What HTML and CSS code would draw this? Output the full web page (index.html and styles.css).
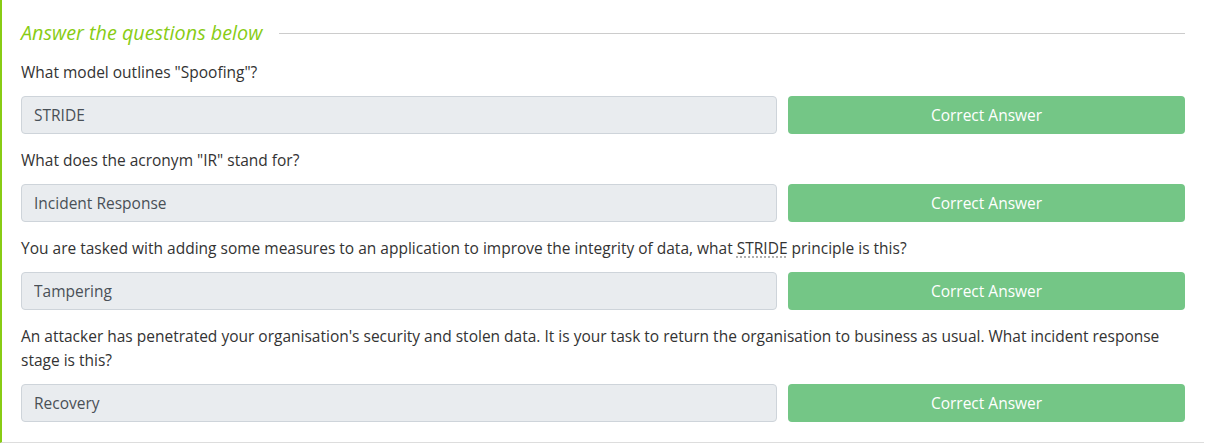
FILE: index.html
```html
<!DOCTYPE html>
<html lang="en">
<head>
    <meta charset="UTF-8">
    <meta name="viewport" content="width=device-width, initial-scale=1.0">
    <title>Task Questions</title>
    <link rel="stylesheet" href="styles.css">
</head>
<body>
    <div class="task">
        <div class="task-heading">
            <h3>Answer the questions below</h3>
            <span class="rule"></span>
        </div>

        <div class="question">
            <p>What model outlines "Spoofing"?</p>
            <div class="answer-row">
                <input type="text" class="answer" value="STRIDE" disabled>
                <button type="button" class="correct">Correct Answer</button>
            </div>
        </div>

        <div class="question">
            <p>What does the acronym "IR" stand for?</p>
            <div class="answer-row">
                <input type="text" class="answer" value="Incident Response" disabled>
                <button type="button" class="correct">Correct Answer</button>
            </div>
        </div>

        <div class="question">
            <p>You are tasked with adding some measures to an application to improve the integrity of data, what <abbr title="Spoofing, Tampering, Repudiation, Information disclosure, Denial of service, Elevation of privilege">STRIDE</abbr> principle is this?</p>
            <div class="answer-row">
                <input type="text" class="answer" value="Tampering" disabled>
                <button type="button" class="correct">Correct Answer</button>
            </div>
        </div>

        <div class="question">
            <p>An attacker has penetrated your organisation's security and stolen data. It is your task to return the organisation to business as usual. What incident response stage is this?</p>
            <div class="answer-row">
                <input type="text" class="answer" value="Recovery" disabled>
                <button type="button" class="correct">Correct Answer</button>
            </div>
        </div>
    </div>
</body>
</html>
```

FILE: styles.css
```css
body {
    margin: 0;
    background-color: #fff;
    font-family: 'Open Sans', sans-serif;
    color: #333;
}
.task {
    width: 1204px;
    border-left: 2px solid #88cc14;
    border-bottom: 1px solid #ddd;
    padding: 21px 19px 20px 19px;
    box-sizing: border-box;
}
.task-heading {
    display: flex;
    align-items: center;
    gap: 17px;
    margin-bottom: 15px;
}
.task-heading h3 {
    margin: 0;
    font-size: 19.8px;
    font-style: italic;
    font-weight: normal;
    color: #88cc14;
    line-height: 24px;
}
.rule {
    flex: 1;
    height: 1px;
    background-color: #ccc;
}
.question p {
    margin: 0 0 12px 0;
    font-size: 15.5px;
    line-height: 24px;
}
.question abbr {
    text-decoration: underline dotted #999;
    text-underline-offset: 3px;
}
.answer-row {
    display: grid;
    grid-template-columns: 1fr 397px;
    gap: 11px;
    margin-bottom: 14px;
}
.question:last-child .answer-row {
    margin-bottom: 0;
}
.answer {
    height: 38px;
    padding: 0 12px;
    font-family: inherit;
    font-size: 15.5px;
    color: #495057;
    background-color: #e9ecef;
    border: 1px solid #ced4da;
    border-radius: 4px;
    box-sizing: border-box;
}
.correct {
    height: 38px;
    font-family: inherit;
    font-size: 15.5px;
    color: #fff;
    background-color: #74c686;
    border: none;
    border-radius: 4px;
}
```
